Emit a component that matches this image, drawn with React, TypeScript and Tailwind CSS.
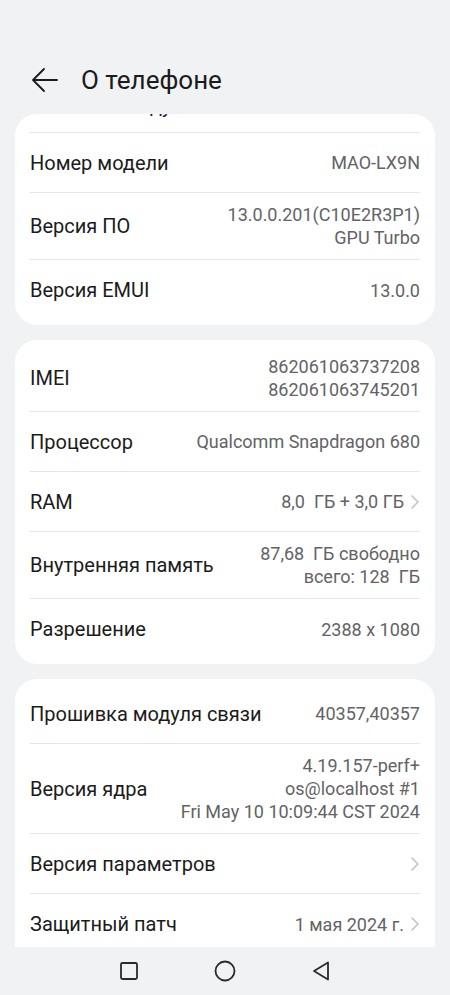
import React from 'react';

type Row = {
  label: string;
  value?: string[];
  chevron?: boolean;
};

const card1: Row[] = [
  { label: 'Номер модели', value: ['MAO-LX9N'] },
  { label: 'Версия ПО', value: ['13.0.0.201(C10E2R3P1)', 'GPU Turbo'] },
  { label: 'Версия EMUI', value: ['13.0.0'] },
];

const card2: Row[] = [
  { label: 'IMEI', value: ['862061063737208', '862061063745201'] },
  { label: 'Процессор', value: ['Qualcomm Snapdragon 680'] },
  { label: 'RAM', value: ['8,0  ГБ + 3,0 ГБ'], chevron: true },
  { label: 'Внутренняя память', value: ['87,68  ГБ свободно', 'всего: 128  ГБ'] },
  { label: 'Разрешение', value: ['2388 x 1080'] },
];

const card3: Row[] = [
  { label: 'Прошивка модуля связи', value: ['40357,40357'] },
  { label: 'Версия ядра', value: ['4.19.157-perf+', 'os@localhost #1', 'Fri May 10 10:09:44 CST 2024'] },
  { label: 'Версия параметров', chevron: true },
  { label: 'Защитный патч', value: ['1 мая 2024 г.'], chevron: true },
];

function Chevron() {
  return (
    <svg width="10" height="16" viewBox="0 0 10 16" className="ml-[6px] shrink-0">
      <path d="M2 2l6 6-6 6" fill="none" stroke="#c4c4c6" strokeWidth="1.6" strokeLinecap="round" strokeLinejoin="round" />
    </svg>
  );
}

function InfoRow({ row, last }: { row: Row; last?: boolean }) {
  return (
    <div
      className={
        'flex min-h-[60px] items-center justify-between py-[10px] ' +
        (last ? '' : 'border-b border-[#e6e6e8]')
      }
    >
      <span className="text-[20px] text-[#1b1b1b] whitespace-nowrap">{row.label}</span>
      <div className="flex items-center">
        {row.value && (
          <div className="flex flex-col items-end text-[18px] leading-[23px] text-[#636366] whitespace-pre">
            {row.value.map((v) => (
              <span key={v}>{v}</span>
            ))}
          </div>
        )}
        {row.chevron && <Chevron />}
      </div>
    </div>
  );
}

export default function App() {
  return (
    <div
      className="flex h-[995px] w-[450px] flex-col overflow-hidden bg-[#f1f2f4]"
      style={{ fontFamily: 'Roboto, "Noto Sans", sans-serif' }}
    >
      {/* header */}
      <div className="flex h-[114px] shrink-0 items-center gap-[22px] px-[31px] pt-[46px]">
        <svg width="28" height="26" viewBox="0 0 28 26">
          <path d="M26 13H3M13 2L2 13l11 11" fill="none" stroke="#1b1b1b" strokeWidth="1.8" strokeLinecap="round" strokeLinejoin="round" />
        </svg>
        <h1 className="text-[26px] text-[#1b1b1b]">О телефоне</h1>
      </div>

      {/* scroll area */}
      <div className="flex min-h-0 flex-1 flex-col gap-[15px] overflow-hidden px-[15px]">
        <div className="rounded-[22px] bg-white px-[15px] pb-[5px]">
          <div className="flex h-[19px] items-end overflow-hidden border-b border-[#e6e6e8] pl-[120px]">
            <div className="flex h-[52px] shrink-0 items-center">
              <span className="text-[20px] text-[#1b1b1b] whitespace-nowrap">ду</span>
            </div>
          </div>
          {card1.map((r, i) => (
            <InfoRow key={r.label} row={r} last={i === card1.length - 1} />
          ))}
        </div>

        <div className="rounded-[22px] bg-white px-[15px] py-[5px]">
          {card2.map((r, i) => (
            <InfoRow key={r.label} row={r} last={i === card2.length - 1} />
          ))}
        </div>

        <div className="shrink-0 rounded-t-[22px] bg-white px-[15px] pt-[5px]">
          {card3.map((r, i) => (
            <InfoRow key={r.label} row={r} last={i === card3.length - 1} />
          ))}
        </div>
      </div>

      {/* nav bar */}
      <div className="flex h-[48px] shrink-0 items-center justify-center gap-[75px]">
        <svg width="20" height="20" viewBox="0 0 20 20">
          <rect x="2" y="2" width="16" height="16" rx="1.5" fill="none" stroke="#2a2a2a" strokeWidth="1.8" />
        </svg>
        <svg width="22" height="22" viewBox="0 0 22 22">
          <circle cx="11" cy="11" r="9.5" fill="none" stroke="#2a2a2a" strokeWidth="1.8" />
        </svg>
        <svg width="20" height="22" viewBox="0 0 20 22">
          <path d="M17 2.5v17L3 11z" fill="none" stroke="#2a2a2a" strokeWidth="1.8" strokeLinejoin="round" />
        </svg>
      </div>
    </div>
  );
}
